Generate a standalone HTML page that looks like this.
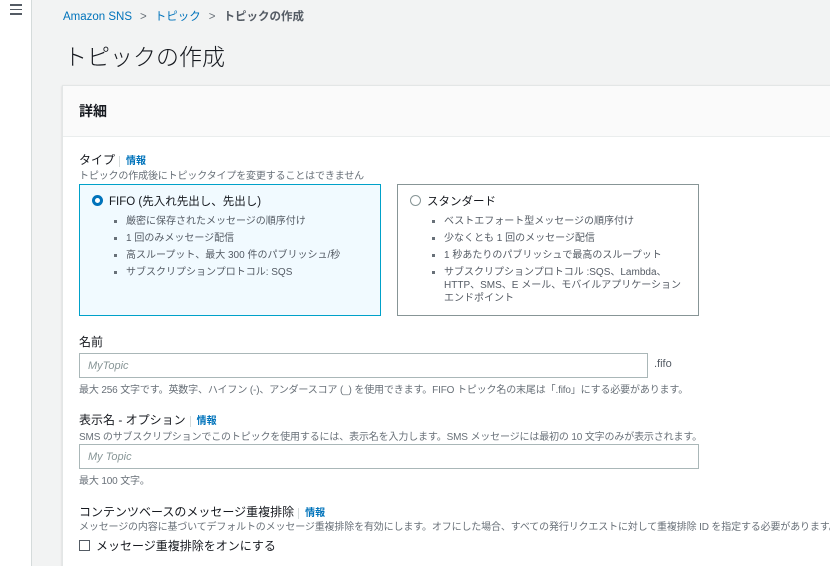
<!DOCTYPE html>
<html><head><meta charset="utf-8"><style>
*{box-sizing:border-box;margin:0;padding:0}
html,body{width:830px;height:566px;overflow:hidden}
body{background:#f2f3f3;font-family:"Liberation Sans","Noto Sans CJK JP",sans-serif;color:#16191f;position:relative}
.side{position:absolute;left:0;top:0;width:32px;height:566px;background:#fff;border-right:1px solid #d5dbdb}
.ham{position:absolute;left:10px;top:4px;width:12px}
.ham i{display:block;height:1.5px;background:#545b64;margin-bottom:3px}
.bc{position:absolute;left:63px;top:8px;font-size:11.5px;color:#545b64}
.bc a{color:#0073bb;text-decoration:none}
.bc .s{margin:0 8px;color:#687078}
h1{position:absolute;left:64px;top:38px;font-size:23px;font-weight:300;color:#16191f;font-family:"Noto Sans CJK JP",sans-serif}
.panel{position:absolute;left:62px;top:85px;width:800px;height:500px;background:#fff;border:1px solid #e3e6e6;box-shadow:0 1px 2px rgba(0,0,0,.15)}
.ph{height:51px;background:#fafafa;border-bottom:1px solid #eaeded;padding:15px 16px;font-size:14px;font-weight:bold}
.abs{position:absolute;white-space:nowrap}
.lbl{font-size:12px;color:#16191f}
.info{color:#0073bb;font-size:10px;font-weight:bold;border-left:1px solid #d5dbdb;padding-left:6px;margin-left:4px}
.desc{font-size:10px;color:#687078;letter-spacing:-0.15px}
.card{position:absolute;top:184px;height:132px;border:1px solid #879596;padding:8px 12px;font-size:11.5px}
.card ul{margin-top:4px;padding-left:34px;font-size:10px;color:#545b64;line-height:17px}
.card li{list-style:none;position:relative}
.card li:before{content:"";position:absolute;left:-12px;top:7px;width:3px;height:3px;background:#687078}
.rad{display:inline-block;width:11px;height:11px;border-radius:50%;border:1px solid #879596;vertical-align:-1px;margin-right:6px}
.inp{position:absolute;height:25px;border:1px solid #aab7b8;background:#fff;font-size:11px;font-style:italic;color:#879596;padding:6px 8px}
</style></head><body>
<div class="side"><div class="ham"><i></i><i></i><i></i></div></div>
<div class="bc"><a>Amazon SNS</a><span class="s">&gt;</span><a>トピック</a><span class="s">&gt;</span><b>トピックの作成</b></div>
<h1>トピックの作成</h1>
<div class="panel"><div class="ph">詳細</div></div>
<div class="abs lbl" style="left:79px;top:151px">タイプ<span class="info">情報</span></div>
<div class="abs desc" style="left:79px;top:167px">トピックの作成後にトピックタイプを変更することはできません</div>
<div class="card" style="left:79px;width:302px;background:#f1faff;border-color:#00a1c9">
<span class="rad" style="border:3.5px solid #0073bb;background:#fff"></span>FIFO (先入れ先出し、先出し)
<ul><li>厳密に保存されたメッセージの順序付け</li><li>1 回のみメッセージ配信</li><li>高スループット、最大 300 件のパブリッシュ/秒</li><li>サブスクリプションプロトコル: SQS</li></ul></div>
<div class="card" style="left:397px;width:302px;background:#fff">
<span class="rad"></span>スタンダード
<ul><li>ベストエフォート型メッセージの順序付け</li><li>少なくとも 1 回のメッセージ配信</li><li>1 秒あたりのパブリッシュで最高のスループット</li><li style="line-height:13px;padding-top:2px">サブスクリプションプロトコル :SQS、Lambda、HTTP、SMS、E メール、モバイルアプリケーションエンドポイント</li></ul></div>
<div class="abs lbl" style="left:79px;top:333px">名前</div>
<div class="inp" style="left:79px;top:353px;width:569px">MyTopic</div>
<div class="abs" style="left:654px;top:358px;font-size:11px;color:#545b64">.fifo</div>
<div class="abs desc" style="left:79px;top:381px">最大 256 文字です。英数字、ハイフン (-)、アンダースコア (_) を使用できます。FIFO トピック名の末尾は「.fifo」にする必要があります。</div>
<div class="abs lbl" style="left:79px;top:411px">表示名 - オプション<span class="info">情報</span></div>
<div class="abs desc" style="left:79px;top:428px">SMS のサブスクリプションでこのトピックを使用するには、表示名を入力します。SMS メッセージには最初の 10 文字のみが表示されます。</div>
<div class="inp" style="left:79px;top:444px;width:620px">My Topic</div>
<div class="abs desc" style="left:79px;top:472px">最大 100 文字。</div>
<div class="abs lbl" style="left:79px;top:503px">コンテンツベースのメッセージ重複排除<span class="info">情報</span></div>
<div class="abs desc" style="left:79px;top:518px">メッセージの内容に基づいてデフォルトのメッセージ重複排除を有効にします。オフにした場合、すべての発行リクエストに対して重複排除 ID を指定する必要があります。</div>
<div class="abs lbl" style="left:79px;top:537px"><span style="display:inline-block;width:11px;height:11px;border:1px solid #545b64;vertical-align:-1px;margin-right:6px"></span>メッセージ重複排除をオンにする</div>
</body></html>
